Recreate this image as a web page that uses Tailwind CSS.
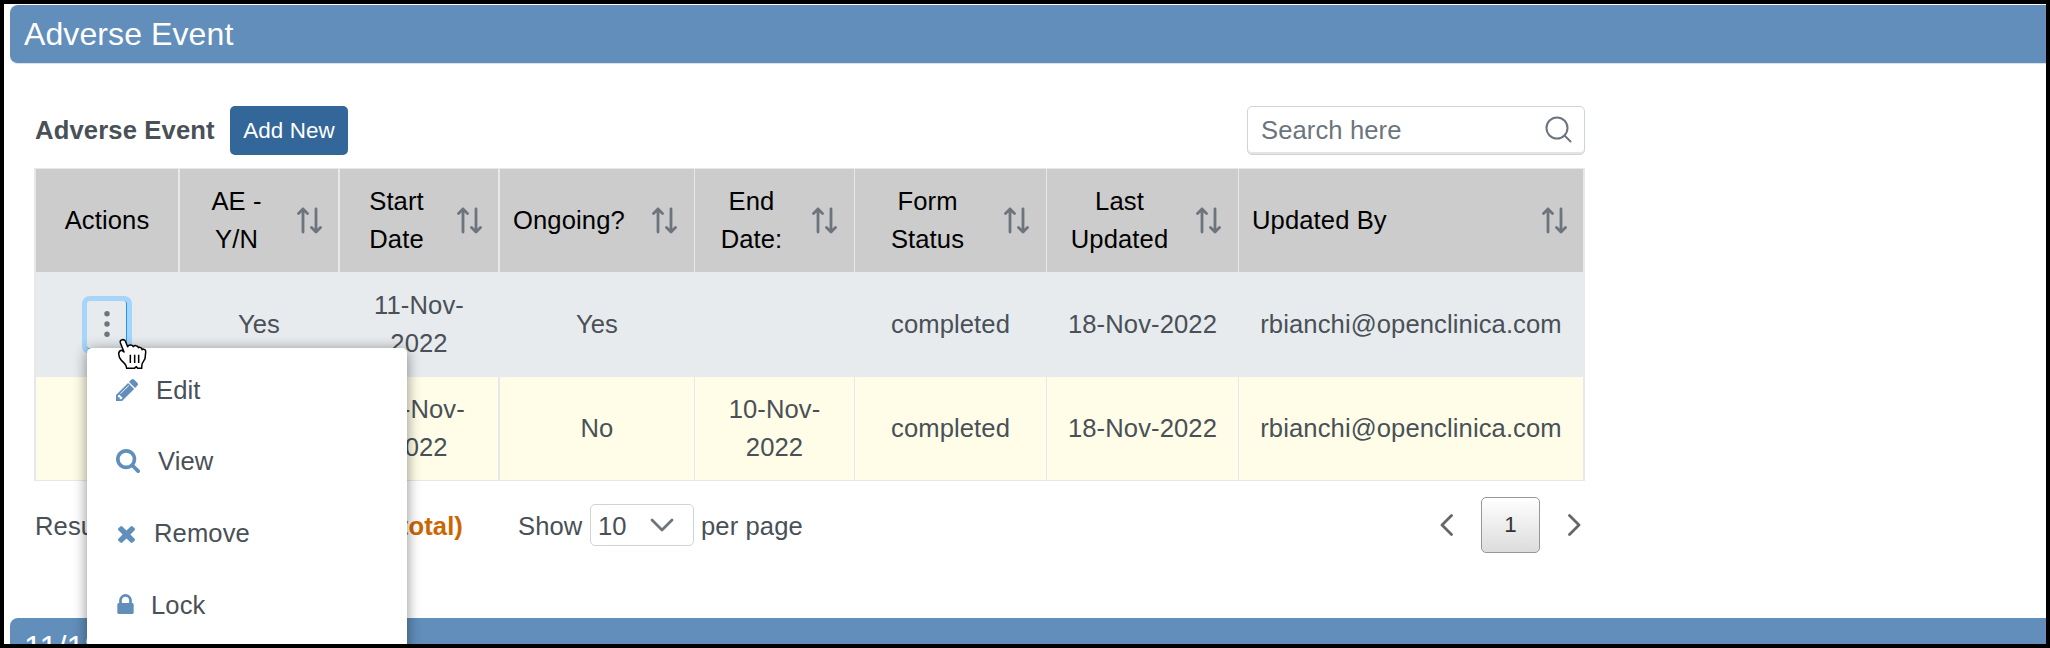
<!DOCTYPE html>
<html lang="en">
<head>
  <meta charset="UTF-8">
  <meta name="viewport" content="width=device-width, initial-scale=1.0">
  <title>Adverse Event</title>
  <script src="https://cdn.jsdelivr.net/npm/@tailwindcss/browser@4"></script>
</head>
<body class="bg-white font-['Liberation_Sans',Arial,sans-serif] text-[25.6px] leading-[38px] tracking-[0.1px] text-[#495057]">
  <!-- Sort icon used by the table headers -->
  <svg class="hidden">
    <symbol id="sort" viewBox="0 0 25 27">
      <path d="M6 25V2M1.500 6.500L6 2l4.500 4.500M19 2v23M14.500 20.500L19 25l4.500-4.500" fill="none" stroke="#6c757d" stroke-width="2.800" stroke-linecap="round" stroke-linejoin="round"/>
    </symbol>
  </svg>

  <div class="relative h-[648px] w-[2050px] overflow-hidden border-4 border-black pl-1.5 pt-px">
    <!-- Section header -->
    <div class="h-[59px] rounded-l-lg border-b border-[#dee2e6] bg-[#618ebb] pl-3.5 text-[32px] leading-[58px] text-white">Adverse Event</div>

    <div class="ml-6 mt-[42px] w-[1551px]">
      <!-- Toolbar -->
      <div class="flex h-[49px] items-center">
        <h2 class="w-[196px] pb-0.5 pl-px font-bold tracking-[0.15px]">Adverse Event</h2>
        <button class="h-[49px] w-[118px] rounded-[5px] bg-[#336699] text-[22.4px] text-white">Add New</button>
        <div class="ml-auto flex h-[49px] w-[338px] items-center justify-between rounded-[5px] border border-[#ced4da] pb-0.5 pl-[13px] pr-3 text-[#6c757d] shadow-[inset_0_-2px_0_#e4e4e4]">
          <span>Search here</span>
          <svg class="size-[27px]" viewBox="0 0 27 27" fill="none" stroke="#6c757d" stroke-width="2" stroke-linecap="round"><circle cx="12" cy="12" r="10.500"/><path d="M19.500 19.500l6 6"/></svg>
        </div>
      </div>

      <!-- Events table -->
      <table class="mt-[13px] w-[1551px] table-fixed border-separate border-spacing-0 border-l-2 border-t border-[#e5e9ec] text-center">
        <colgroup>
          <col class="w-[144px]"><col class="w-[160px]"><col class="w-[160px]"><col class="w-[195px]"><col class="w-[160px]"><col class="w-[192px]"><col class="w-[192px]"><col class="w-[346px]">
        </colgroup>
        <thead>
          <tr class="h-[103px] bg-[#cccccc] text-black">
            <th class="border-r-2 border-[#e5e9ec] p-0 pb-0.5 font-normal">Actions</th>
            <th class="border-r-2 border-[#e5e9ec] p-0 font-normal"><div class="flex items-center pl-3 pr-4"><span class="mr-4 flex-1 pb-0.5">AE -<br>Y/N</span><svg class="h-[27px] w-[25px]"><use href="#sort"/></svg></div></th>
            <th class="border-r-2 border-[#e5e9ec] p-0 font-normal"><div class="flex items-center pl-3 pr-4"><span class="mr-4 flex-1 pb-0.5">Start<br>Date</span><svg class="h-[27px] w-[25px]"><use href="#sort"/></svg></div></th>
            <th class="border-r border-[#e5e9ec] p-0 font-normal"><div class="flex items-center pl-[13px] pr-[17px]"><span class="flex-1 pb-0.5 text-left">Ongoing?</span><svg class="h-[27px] w-[25px]"><use href="#sort"/></svg></div></th>
            <th class="border-r border-[#e5e9ec] p-0 font-normal"><div class="flex items-center pl-3 pr-[17px]"><span class="mr-4 flex-1 pb-0.5">End<br>Date:</span><svg class="h-[27px] w-[25px]"><use href="#sort"/></svg></div></th>
            <th class="border-r border-[#e5e9ec] p-0 font-normal"><div class="flex items-center pl-3 pr-[17px]"><span class="mr-4 flex-1 pb-0.5">Form<br>Status</span><svg class="h-[27px] w-[25px]"><use href="#sort"/></svg></div></th>
            <th class="border-r border-[#e5e9ec] p-0 font-normal"><div class="flex items-center pl-3 pr-[17px]"><span class="mr-4 flex-1 pb-0.5">Last<br>Updated</span><svg class="h-[27px] w-[25px]"><use href="#sort"/></svg></div></th>
            <th class="border-r-2 border-[#e5e9ec] p-0 font-normal"><div class="flex items-center pl-[13px] pr-4"><span class="flex-1 pb-0.5 text-left">Updated By</span><svg class="h-[27px] w-[25px]"><use href="#sort"/></svg></div></th>
          </tr>
        </thead>
        <tbody>
          <tr class="h-[105px] bg-[#e7ebee]">
            <td class="p-0 pr-0.5">
              <button class="mx-auto flex h-12 w-10 items-center justify-center rounded-[3px] border-b border-r border-[#2196f3] shadow-[0_0_0_5px_#a6d5fa]">
                <svg class="h-[26px] w-1.5" viewBox="0 0 6 26" fill="#6c757d"><circle cx="3" cy="2.700" r="2.700"/><circle cx="3" cy="13" r="2.700"/><circle cx="3" cy="23.300" r="2.700"/></svg>
              </button>
            </td>
            <td class="p-0 pb-0.5 pr-0.5">Yes</td>
            <td class="p-0 pb-0.5 pr-0.5">11-Nov-<br>2022</td>
            <td class="p-0 pb-0.5 pr-px">Yes</td>
            <td class="p-0"></td>
            <td class="p-0 pb-0.5 pr-px">completed</td>
            <td class="p-0 pb-0.5 pr-px">18-Nov-2022</td>
            <td class="p-0 pb-0.5 pr-0.5">rbianchi@openclinica.com</td>
          </tr>
          <tr class="h-[104px] bg-[#fffde7]">
            <td class="border-b border-r-2 border-[#e5e9ec] p-0"></td>
            <td class="border-b border-r-2 border-[#e5e9ec] p-0 pb-0.5">Yes</td>
            <td class="border-b border-r-2 border-[#e5e9ec] p-0 pb-0.5">10-Nov-<br>2022</td>
            <td class="border-b border-r border-[#e5e9ec] p-0 pb-0.5">No</td>
            <td class="border-b border-r border-[#e5e9ec] p-0 pb-0.5">10-Nov-<br>2022</td>
            <td class="border-b border-r border-[#e5e9ec] p-0 pb-0.5">completed</td>
            <td class="border-b border-r border-[#e5e9ec] p-0 pb-0.5">18-Nov-2022</td>
            <td class="border-b border-r-2 border-[#e5e9ec] p-0 pb-0.5">rbianchi@openclinica.com</td>
          </tr>
        </tbody>
      </table>

      <!-- Paginator -->
      <div class="mt-4 flex h-14 items-center">
        <div class="flex w-[484px] justify-between pl-px pr-[55px] pt-0.5"><span>Results 1-2 of 2</span><span class="font-bold text-[#cc6600]">(2 total)</span></div>
        <span class="w-[72px] pt-0.5">Show</span>
        <div class="flex h-[42px] w-[104px] items-center justify-between rounded-[5px] border border-[#ced4da] pl-[7px] pr-[19px]">
          <span class="pt-0.5">10</span>
          <svg class="h-[14px] w-[24px]" viewBox="0 0 24 14" fill="none" stroke="#6c757d" stroke-width="2.800" stroke-linecap="round" stroke-linejoin="round"><path d="M2 2l10 10L22 2"/></svg>
        </div>
        <span class="ml-[7px] pt-0.5">per page</span>
        <svg class="ml-auto h-[22px] w-[13px]" viewBox="0 0 13 22" fill="none" stroke="#666" stroke-width="2.800" stroke-linecap="round" stroke-linejoin="round"><path d="M11.500 1.500L2 11l9.500 9.500"/></svg>
        <button class="ml-7 h-14 w-[59px] rounded-[5px] border border-[#979797] bg-linear-to-b from-white to-[#dcdcdc] text-[22.4px] text-[#333]">1</button>
        <svg class="ml-7 mr-1 h-[22px] w-[13px]" viewBox="0 0 13 22" fill="none" stroke="#666" stroke-width="2.800" stroke-linecap="round" stroke-linejoin="round"><path d="M1.500 1.500L11 11l-9.500 9.500"/></svg>
      </div>
    </div>

    <!-- Next section header -->
    <div class="mt-[65px] h-[59px] rounded-l-lg bg-[#618ebb] pl-3.5 text-[32px] leading-[58px] text-white">11/18/2022</div>

    <!-- Actions menu -->
    <div class="absolute left-[83px] top-[344px] h-[330px] w-[320px] rounded-[5px] bg-white pt-1.5 shadow-[0_2px_14px_rgba(0,0,0,0.45)]">
      <a class="flex h-[72px] items-center pl-[29px]"><svg class="mr-[18px] size-[22px]" viewBox="128 149 1515 1515" fill="#618ebb"><path d="M491 1536l91-91-235-235-91 91v107h128v128h107zm523-928q0-22-22-22-10 0-17 7l-542 542q-7 7-7 17 0 22 22 22 10 0 17-7l542-542q7-7 7-17zm-54-192l416 416-832 832h-416v-416zm683 96q0 53-37 90l-166 166-416-416 166-165q36-38 90-38 53 0 91 38l235 234q37 39 37 91z"/></svg>Edit</a>
      <a class="-mt-px flex h-[72px] items-center pl-[29px]"><svg class="mr-[18px] size-6" viewBox="64 128 1664 1664" fill="#618ebb"><path d="M1216 832q0-185-131.500-316.500t-316.500-131.500-316.500 131.500-131.500 316.500 131.500 316.500 316.500 131.500 316.500-131.500 131.500-316.500zm512 832q0 52-38 90t-90 38q-54 0-90-38l-343-342q-179 124-399 124-143 0-273.500-55.500t-225-150-150-225-55.500-273.500 55.500-273.500 150-225 225-150 273.500-55.500 273.500 55.500 225 150 150 225 55.500 273.500q0 220-124 399l343 343q37 37 37 90z"/></svg>View</a>
      <a class="flex h-[72px] items-center pl-[31px]"><svg class="mr-[19px] mt-0.5 size-[17px]" viewBox="302 366 1188 1188" fill="#618ebb"><path d="M1490 1322q0 40-28 68l-136 136q-28 28-68 28t-68-28l-294-294-294 294q-28 28-68 28t-68-28l-136-136q-28-28-28-68t28-68l294-294-294-294q-28-28-28-68t28-68l136-136q28-28 68-28t68 28l294 294 294-294q28-28 68-28t68 28l136 136q28 28 28 68t-28 68l-294 294 294 294q28 28 28 68z"/></svg>Remove</a>
      <a class="flex h-[72px] items-center pl-[30px]"><svg class="mb-0.5 mr-[17px] h-5 w-[17px]" viewBox="320 128 1152 1408" fill="#618ebb"><path d="M640 768h512v-192q0-106-75-181t-181-75-181 75-75 181v192zm832 96v576q0 40-28 68t-68 28h-960q-40 0-68-28t-28-68v-576q0-40 28-68t68-28h32v-192q0-184 132-316t316-132 316 132 132 316v192h32q40 0 68 28t28 68z"/></svg>Lock</a>
    </div>

    <!-- Pointer -->
    <svg class="absolute left-[113px] top-[334px] h-[32px] w-[30px]" viewBox="141 174 90 96"><path d="M151 188q-2-7 6-9 8-1 10 6l6 15q2-5 8-5 7 0 9 5 3-4 8-3 6 1 7 6 3-2 7 0 4 2 4 6 3-3 7-1 5 2 4 10l-2 18-9 16-1 13h-12l-4-5-6 5h-23l-2-8q-4-7-13-15-9-10-9-21 1-10 10-10l6 5z" fill="#fff" stroke="#000" stroke-width="4.500" stroke-linejoin="round"/><path d="M181 224v25M194 224v25M206 224v25" stroke="#000" stroke-width="4.500"/></svg>
  </div>
</body>
</html>
